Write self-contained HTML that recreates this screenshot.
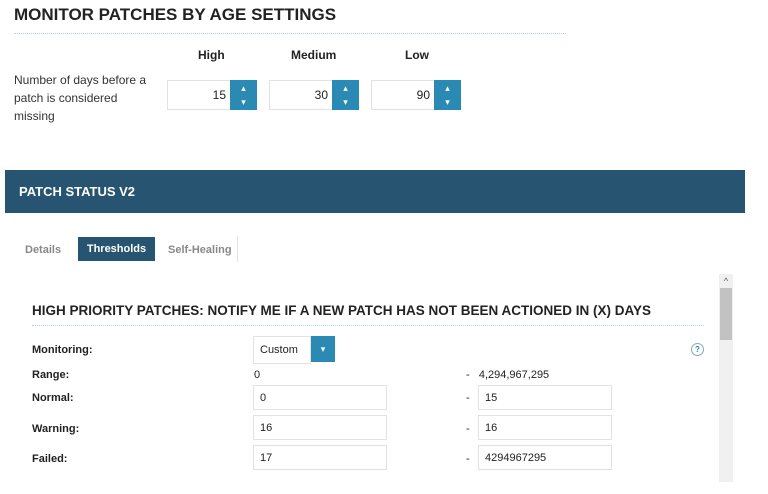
<!DOCTYPE html>
<html><head><style>
body{margin:0;width:768px;height:494px;background:#fff;font-family:"Liberation Sans",sans-serif;position:relative;overflow:hidden;color:#222}
.a{position:absolute}
h1{position:absolute;left:14px;top:5px;margin:0;font-size:17px;font-weight:bold;color:#222}
.dot{position:absolute;border-top:1px dotted #a9d6e2;height:0}
.lab{font-size:12px;font-weight:bold;color:#222}
.inp{position:absolute;border:1px solid #e2e2e2;background:#fff;height:28px;box-sizing:border-box;font-size:11px;line-height:26px}
.spin{position:absolute;width:27px;height:30px;background:#2a8ab4;color:#fff;font-size:9px;text-align:center;line-height:14px;padding-top:1px;box-sizing:border-box}
.t{font-size:11px;color:#222}
</style></head><body>
<h1>MONITOR PATCHES BY AGE SETTINGS</h1>
<div class="dot" style="left:14px;top:33px;width:552px"></div>
<div class="a lab" style="left:198px;top:48px">High</div>
<div class="a lab" style="left:291px;top:48px">Medium</div>
<div class="a lab" style="left:405px;top:48px">Low</div>
<div class="a" style="left:14px;top:71px;font-size:12px;line-height:18px;width:140px;color:#333">Number of days before a patch is considered missing</div>
<div class="inp" style="left:167px;top:80px;width:64px;height:30px;text-align:right;padding-right:4px;font-size:12px;line-height:28px">15</div>
<div class="spin" style="left:230px;top:80px">▴<br>▾</div>
<div class="inp" style="left:269px;top:80px;width:64px;height:30px;text-align:right;padding-right:4px;font-size:12px;line-height:28px">30</div>
<div class="spin" style="left:332px;top:80px">▴<br>▾</div>
<div class="inp" style="left:371px;top:80px;width:64px;height:30px;text-align:right;padding-right:4px;font-size:12px;line-height:28px">90</div>
<div class="spin" style="left:434px;top:80px">▴<br>▾</div>

<div class="a" style="left:5px;top:170px;width:740px;height:43px;background:#275470"></div>
<div class="a" style="left:19px;top:184px;color:#fff;font-weight:bold;font-size:13px">PATCH STATUS V2</div>

<div class="a" style="left:25px;top:244px;font-size:11px;font-weight:bold;color:#888">Details</div>
<div class="a" style="left:78px;top:237px;width:77px;height:24px;background:#275470;color:#fff;font-size:11px;font-weight:bold;text-align:center;line-height:24px">Thresholds</div>
<div class="a" style="left:168px;top:244px;font-size:11px;font-weight:bold;color:#888">Self-Healing</div>
<div class="a" style="left:237px;top:236px;width:1px;height:26px;background:#e4e4e4"></div>

<div class="a" style="left:32px;top:303px;font-size:13.5px;font-weight:bold;color:#222">HIGH PRIORITY PATCHES: NOTIFY ME IF A NEW PATCH HAS NOT BEEN ACTIONED IN (X) DAYS</div>
<div class="dot" style="left:32px;top:325px;width:672px"></div>

<div class="a t" style="left:32px;top:344px;font-weight:bold">Monitoring:</div>
<div class="inp" style="left:253px;top:336px;width:58px;padding-left:6px">Custom</div>
<div class="a" style="left:311px;top:336px;width:24px;height:26px;background:#2a8ab4;color:#fff;font-size:9px;text-align:center;line-height:26px">▾</div>
<div class="a" style="left:691px;top:343px;width:11px;height:11px;border:1px solid #8aa;border-radius:50%;font-size:8px;text-align:center;line-height:11px;color:#2a8ab4;font-weight:bold">?</div>

<div class="a t" style="left:32px;top:369px;font-weight:bold">Range:</div>
<div class="a t" style="left:254px;top:369px">0</div>
<div class="a t" style="left:466px;top:369px">-&nbsp;&nbsp;&nbsp;4,294,967,295</div>

<div class="a t" style="left:32px;top:392px;font-weight:bold">Normal:</div>
<div class="inp" style="left:253px;top:385px;width:134px;height:25px;line-height:25px;padding-left:6px">0</div>
<div class="a t" style="left:466px;top:392px">-</div>
<div class="inp" style="left:478px;top:385px;width:134px;height:25px;line-height:25px;padding-left:6px">15</div>

<div class="a t" style="left:32px;top:423px;font-weight:bold">Warning:</div>
<div class="inp" style="left:253px;top:415px;width:134px;height:25px;line-height:25px;padding-left:6px">16</div>
<div class="a t" style="left:466px;top:423px">-</div>
<div class="inp" style="left:478px;top:415px;width:134px;height:25px;line-height:25px;padding-left:6px">16</div>

<div class="a t" style="left:32px;top:453px;font-weight:bold">Failed:</div>
<div class="inp" style="left:253px;top:445px;width:134px;height:25px;line-height:25px;padding-left:6px">17</div>
<div class="a t" style="left:466px;top:453px">-</div>
<div class="inp" style="left:478px;top:445px;width:134px;height:25px;line-height:25px;padding-left:6px">4294967295</div>

<div class="a" style="left:719px;top:274px;width:14px;height:208px;background:#f0f0f0"></div>
<div class="a" style="left:719px;top:276px;width:14px;height:14px;font-size:9px;text-align:center;color:#555">^</div>
<div class="a" style="left:720px;top:288px;width:12px;height:52px;background:#c2c2c2"></div>
</body></html>
